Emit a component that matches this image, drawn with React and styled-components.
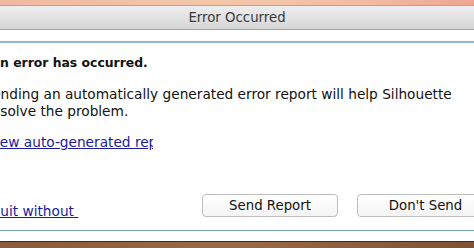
import styled, { createGlobalStyle } from 'styled-components';

const GlobalStyle = createGlobalStyle`
  html, body {
    margin: 0;
    padding: 0;
    background: #fff;
  }

  body {
    width: 474px;
    height: 248px;
    overflow: hidden;
    font-family: "DejaVu Sans", "Liberation Sans", sans-serif;
  }
`;

const Screen = styled.div`
  display: flex;
  flex-direction: column;
  width: 474px;
  height: 248px;
  overflow: hidden;
`;

const DesktopStrip = styled.div`
  height: ${(p) => p.$height}px;
  flex-shrink: 0;
  background: ${(p) => p.$bg};
  border-${(p) => p.$edge}: 1px solid ${(p) => p.$line};
`;

const TitleBar = styled.div`
  height: 23px;
  flex-shrink: 0;
  display: flex;
  align-items: center;
  justify-content: center;
  background: linear-gradient(#eeeeee, #d6d6d6);
  border-bottom: 1px solid #a4a4a4;
  color: #3a3a3a;
  font-size: 13.3px;
`;

const Gap = styled.div`
  height: ${(p) => p.$size}px;
  flex-shrink: 0;
`;

const Body = styled.div`
  flex: 1;
  display: flex;
  flex-direction: column;
  border-top: 2px solid #8fb9dc;
  border-bottom: 1px solid #7ea6ae;
  background: #fff;
`;

const Heading = styled.div`
  margin-top: 11px;
  margin-left: -9.6px;
  color: #111;
  font-size: 12.4px;
  font-weight: bold;
  line-height: 17px;
`;

const Message = styled.div`
  margin-top: 15px;
  display: flex;
  flex-direction: column;
`;

const MessageLine = styled.span`
  margin-left: ${(p) => p.$shift}px;
  color: #111;
  font-size: 13.7px;
  line-height: 17px;
  white-space: nowrap;
`;

const LinkClip = styled.div`
  margin-top: 12px;
  width: 153px;
  overflow: hidden;
  white-space: nowrap;
`;

const LinkText = styled.a`
  display: inline-block;
  margin-left: ${(p) => p.$shift}px;
  color: #1c1a9e;
  font-size: 13.7px;
  line-height: 17px;
  text-decoration: underline;
  white-space: pre;
  cursor: pointer;
`;

const Footer = styled.div`
  margin-top: auto;
  margin-bottom: 13px;
  display: flex;
  align-items: flex-end;
`;

const QuitLink = styled(LinkText)`
  margin-bottom: -3px;
`;

const Buttons = styled.div`
  margin-left: auto;
  margin-right: -20px;
  display: flex;
  gap: 19px;
`;

const Button = styled.button`
  width: ${(p) => p.$width}px;
  height: 23px;
  padding: 0;
  border: 1px solid #bdbdbd;
  border-radius: 4px;
  background: linear-gradient(#ffffff, #f4f4f4);
  color: #111;
  font-family: "DejaVu Sans", "Liberation Sans", sans-serif;
  font-size: 13.3px;
`;

export default function App() {
  return (
    <Screen>
      <GlobalStyle />
      <DesktopStrip
        $height={5}
        $bg="linear-gradient(90deg, #efb9a3, #f2c7a8 45%, #f3bda6 75%, #eea592)"
        $edge="bottom"
        $line="#c99a8c"
      />
      <TitleBar>Error Occurred</TitleBar>
      <Gap $size={11} />
      <Body>
        <Heading>An error has occurred.</Heading>
        <Message>
          <MessageLine $shift={-16.5}>
            Sending an automatically generated error report will help Silhouette
          </MessageLine>
          <MessageLine $shift={-13.5}>resolve the problem.</MessageLine>
        </Message>
        <LinkClip>
          <LinkText $shift={-13}>View auto-generated report</LinkText>
        </LinkClip>
        <Footer>
          <QuitLink $shift={-10.5}>{'Quit without '}</QuitLink>
          <Buttons>
            <Button $width={136}>Send Report</Button>
            <Button $width={137}>Don't Send</Button>
          </Buttons>
        </Footer>
      </Body>
      <Gap $size={10} />
      <DesktopStrip
        $height={6}
        $bg="linear-gradient(90deg, #8a5a3c, #9a6a48 50%, #7e5236)"
        $edge="top"
        $line="#3a2a20"
      />
    </Screen>
  );
}
